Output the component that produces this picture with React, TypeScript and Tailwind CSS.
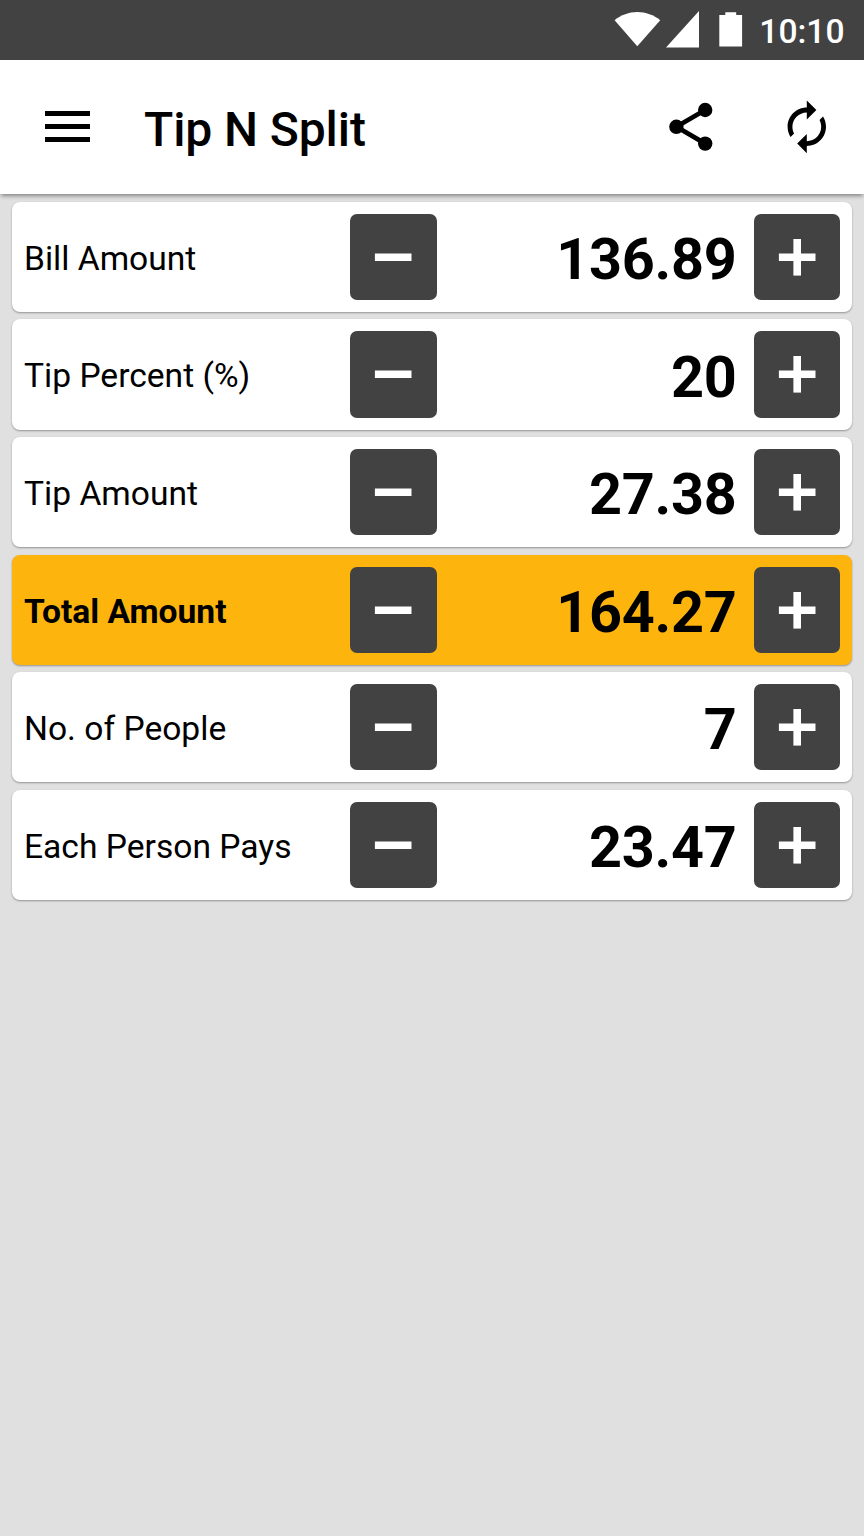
import { useState } from "react";
import clsx from "clsx";

type Row = {
  label: string;
  value: number;
  step: number;
  digits: number;
  highlight?: boolean;
};

const ROWS: Row[] = [
  { label: "Bill Amount", value: 136.89, step: 1, digits: 2 },
  { label: "Tip Percent (%)", value: 20, step: 1, digits: 0 },
  { label: "Tip Amount", value: 27.38, step: 1, digits: 2 },
  { label: "Total Amount", value: 164.27, step: 1, digits: 2, highlight: true },
  { label: "No. of People", value: 7, step: 1, digits: 0 },
  { label: "Each Person Pays", value: 23.47, step: 1, digits: 2 },
];

function StatusBar() {
  return (
    <div className="flex h-[60px] items-center justify-end bg-[#424242] pr-[19.5px] text-white">
      <svg className="h-[60px] w-[132px]" viewBox="612 0 132 60" fill="currentColor" aria-hidden="true">
        <path d="M614.6 20.2C621 15 629 12 637.3 12s16.5 3 22.9 8.2L637.3 46.2z" />
        <path d="M699 11v36.6h-33z" />
        <path d="M719.3 15h6v-2.8h10.9V15h5.9v31.6h-22.8z" />
      </svg>
      <span className="ml-[15.6px] pt-[3px] text-[33.6px] leading-none font-medium">10:10</span>
    </div>
  );
}

function Toolbar({ onReset }: { onReset: () => void }) {
  return (
    <header className="relative flex h-[134.4px] items-center bg-white pr-[28.8px] pl-[45px] shadow-[0_3px_4px_-1px_rgba(0,0,0,0.4)]">
      <button aria-label="Menu" className="-mt-px">
        <svg className="h-[31px] w-[45px]" viewBox="0 0 45 31" aria-hidden="true">
          <path d="M0 0h45v5H0zM0 13h45v5H0zM0 26h45v5H0z" />
        </svg>
      </button>
      <h1 className="mt-[5px] ml-[54px] flex-1 text-[48px] leading-none font-medium tracking-[-0.1px]">Tip N Split</h1>
      <button aria-label="Share">
        <svg className="size-[57.6px]" viewBox="0 0 24 24" aria-hidden="true">
          <path d="M6 12l12-7M6 12l12 7" stroke="currentColor" strokeWidth="2" />
          <circle cx="6" cy="12" r="3" />
          <circle cx="18" cy="5" r="3" />
          <circle cx="18" cy="19" r="3" />
        </svg>
      </button>
      <button aria-label="Reset" className="ml-[57.6px]" onClick={onReset}>
        <svg className="size-[57.6px]" viewBox="0 0 24 24" aria-hidden="true">
          <path d="M12 6v3l4-4-4-4v3c-4.42 0-8 3.58-8 8 0 1.57.46 3.03 1.24 4.26L6.7 14.8c-.45-.83-.7-1.79-.7-2.8 0-3.31 2.69-6 6-6zm6.76 1.74L17.3 9.2c.44.84.7 1.79.7 2.8 0 3.31-2.69 6-6 6v-3l-4 4 4 4v-3c4.42 0 8-3.58 8-8 0-1.57-.46-3.03-1.24-4.26z" />
        </svg>
      </button>
    </header>
  );
}

function StepButton({ kind, onClick }: { kind: "minus" | "plus"; onClick: () => void }) {
  return (
    <button
      aria-label={kind === "plus" ? "Increase" : "Decrease"}
      onClick={onClick}
      className="size-[86.4px] shrink-0 rounded-[7px] bg-[#424242]"
    >
      <svg className="size-full" viewBox="0 0 86.4 86.4" fill="white" aria-hidden="true">
        <path d="M24.9 39.5h36.6v7.6H24.9z" />
        {kind === "plus" && <path d="M39.4 25h7.6v36.6h-7.6z" />}
      </svg>
    </button>
  );
}

function AmountRow({ row, onStep }: { row: Row; onStep: (delta: number) => void }) {
  return (
    <div
      className={clsx(
        "flex h-[110.4px] items-center rounded-[8px] px-3 shadow-[0_1px_2px_rgba(0,0,0,0.35)]",
        row.highlight ? "bg-[#fdb50d]" : "bg-white",
      )}
    >
      <span className={clsx("w-[326.4px] pt-[3.4px] text-[33.6px] leading-none", row.highlight && "font-bold")}>
        {row.label}
      </span>
      <StepButton kind="minus" onClick={() => onStep(-row.step)} />
      <span className="flex-1 pt-1.5 pr-[17px] text-right text-[57.6px] leading-none font-bold tracking-[-0.25px]">
        {row.value.toFixed(row.digits)}
      </span>
      <StepButton kind="plus" onClick={() => onStep(row.step)} />
    </div>
  );
}

export default function App() {
  const [rows, setRows] = useState(ROWS);

  const step = (index: number, delta: number) =>
    setRows(rows.map((r, i) => (i === index ? { ...r, value: Math.max(0, r.value + delta) } : r)));

  return (
    <div className="flex min-h-screen flex-col bg-[#e0e0e0] font-[Roboto,sans-serif] text-black">
      <StatusBar />
      <Toolbar onReset={() => setRows(ROWS)} />
      <main className="flex flex-col gap-[7.2px] px-3 pt-[7.4px]">
        {rows.map((row, i) => (
          <AmountRow key={row.label} row={row} onStep={(delta) => step(i, delta)} />
        ))}
      </main>
    </div>
  );
}
